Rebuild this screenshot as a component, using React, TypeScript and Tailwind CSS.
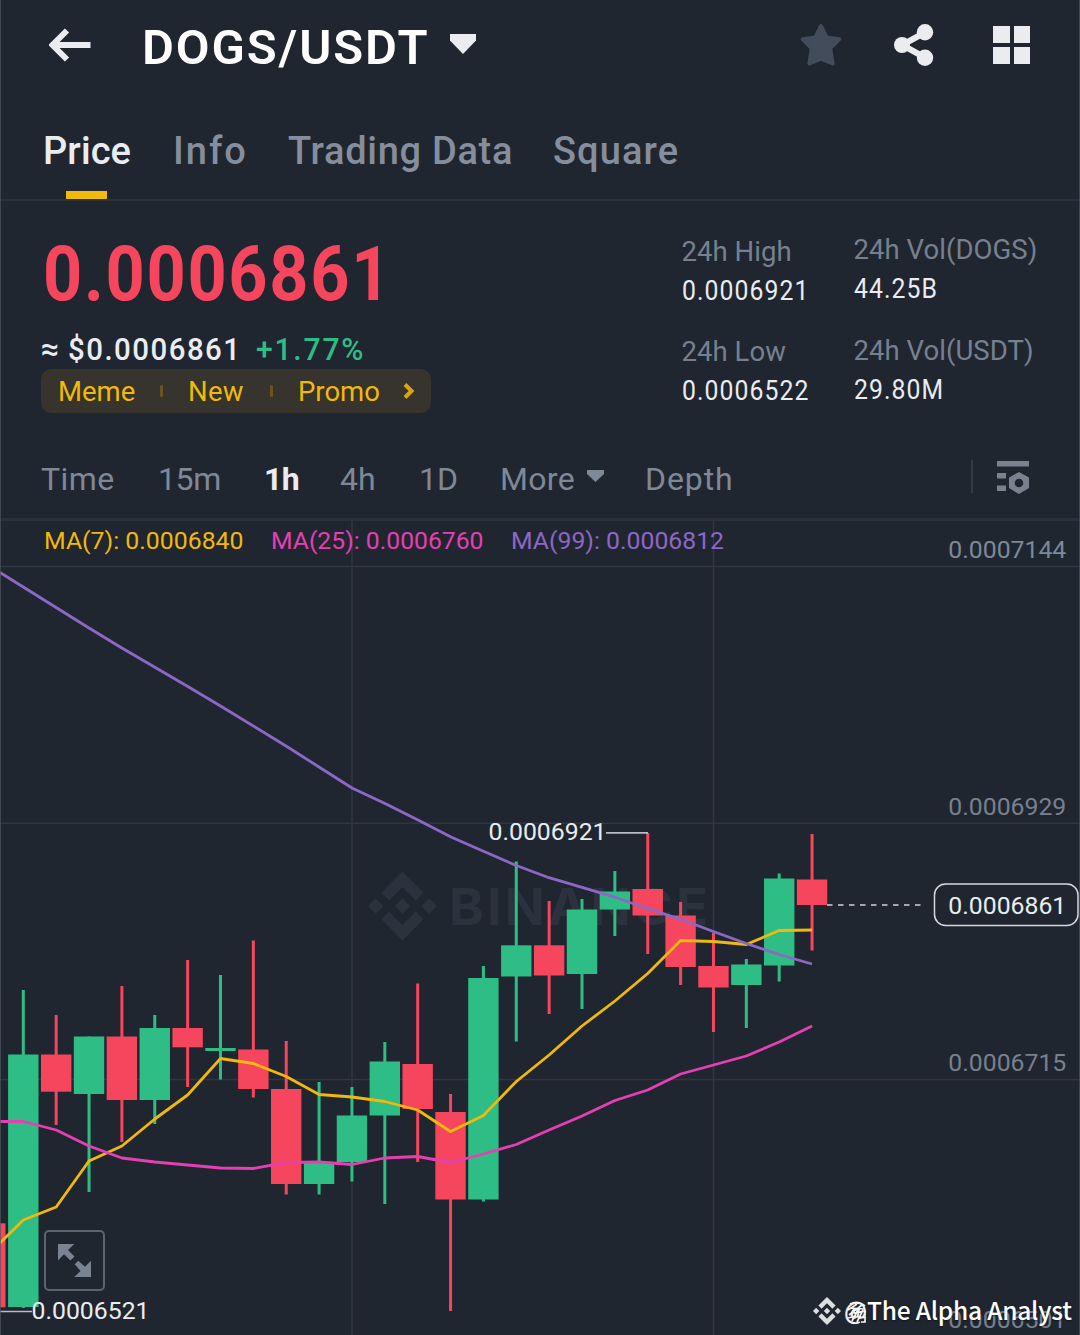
import React from "react";

const tabs = [
  { label: "Price", cls: "w-[88px] text-[#eaecef] tracking-[0.1px]", active: true },
  { label: "Info", cls: "w-[73px] text-[#848e9c] tracking-[2px]" },
  { label: "Trading Data", cls: "w-[223px] text-[#848e9c] tracking-[0.7px]" },
  { label: "Square", cls: "w-[126px] text-[#848e9c] tracking-[1.1px]" },
];

const up = "#2ebd85";
const down = "#f6465d";

/* high, body top, body bottom, low */
const candles: [string, number, number, number, number][] = [
  [up, 990, 1054.5, 1307, 1308],
  [down, 1015, 1054.5, 1091.7, 1125],
  [up, 1036.5, 1036.5, 1094, 1192],
  [down, 986, 1036.5, 1100, 1142],
  [up, 1015, 1028, 1100, 1124],
  [down, 960, 1028, 1047.3, 1087],
  [up, 975, 1048, 1051, 1079.5],
  [down, 940.5, 1049.5, 1089, 1097.5],
  [down, 1041, 1089, 1184, 1194.5],
  [up, 1082, 1163, 1184, 1194.5],
  [up, 1087, 1115.5, 1162, 1181.5],
  [up, 1042, 1061.5, 1115.5, 1204],
  [down, 983.5, 1064, 1109, 1162],
  [down, 1094, 1112, 1199.5, 1311],
  [up, 966, 978, 1199.5, 1201.5],
  [up, 861.5, 945.3, 976.5, 1041.5],
  [down, 901, 945.3, 975.5, 1014],
  [up, 899, 909.5, 974, 1009],
  [up, 871, 891.5, 909.5, 936],
  [down, 833, 889, 915.5, 954],
  [down, 902, 915.5, 967, 985],
  [down, 933, 966, 987.5, 1032],
  [up, 959, 964.5, 985, 1028],
  [up, 873.5, 878.5, 965.5, 981.5],
  [down, 834, 879.5, 905, 950.5],
];

const ma7 = [1220, 1207, 1161, 1146, 1119, 1095, 1058.5, 1063.5, 1076.5, 1094.5, 1097, 1101.5, 1110, 1131.5, 1115.5, 1081.5, 1055, 1026, 1001, 973.5, 940.5, 941.5, 944.5, 930.5, 930];
const ma25 = [1121.5, 1130, 1146, 1158, 1162, 1165, 1168, 1168.5, 1162.5, 1162, 1164.5, 1158, 1156.5, 1162.5, 1154, 1144.5, 1130, 1116, 1100.5, 1090, 1074, 1065, 1056, 1042, 1026];
const ma99 =
  "0,572.5 89,628 121,647.5 187,686 220.5,706 286,746 319,767 352,788 385,803.5 418,820 451,837 484,851.5 516.3,865.5 549,877.7 582,887.3 614.8,897.2 647.7,908.5 680.6,919.3 713.4,931.5 746.3,943.5 779,954.5 812,964";

const cx = (i: number) => 23.3 + i * 32.865;
const line = (start: number, ys: number[]) =>
  [`0,${start}`, ...ys.map((y, i) => `${cx(i).toFixed(1)},${y}`)].join(" ");

const BINANCE =
  "M16.624 13.9202l2.7175 2.7154-7.353 7.353-7.353-7.352 2.7175-2.7164 4.6355 4.6595 4.6356-4.6595zm4.6366-4.6366L24 12l-2.7154 2.7164L18.5682 12l2.6924-2.7164zm-9.272.001l2.7163 2.6914-2.7164 2.7174v-.001L9.2721 12l2.7164-2.7154zm-9.2722-.001L5.4088 12l-2.6914 2.6924L0 12l2.7164-2.7164zM11.9885.0115l7.353 7.329-2.7174 2.7154-4.6356-4.6356-4.6355 4.6595-2.7174-2.7154 7.353-7.353z";

function ChartText({ x, y, w, fill, children }: { x: number; y: number; w: number; fill: string; children: string }) {
  return (
    <text x={x} y={y} textLength={w} lengthAdjust="spacingAndGlyphs" fill={fill} className="text-[23.7px]">
      {children}
    </text>
  );
}

function Header() {
  return (
    <header className="flex h-[94px] items-center pl-[49px] pr-[50px]">
      <svg width="42" height="34" viewBox="0 0 42 34" fill="none" className="mb-1">
        <path d="M3 17H41.5M18 2.5L3.5 17L18 31.5" stroke="#eaecef" strokeWidth="6" />
      </svg>
      <h1 className="ml-[51px] w-[308px] whitespace-nowrap text-[49px] font-semibold leading-none tracking-[1.9px] text-white">
        DOGS/USDT
      </h1>
      <svg width="26" height="20" viewBox="0 0 26 20" className="mb-1.5">
        <path d="M0 0H26V6.5L13 20L0 6.5Z" fill="#eaecef" />
      </svg>
      <div className="mb-1 ml-auto flex items-center">
        <svg width="42" height="42" viewBox="0 0 42 42">
          <path
            d="M21 2L26.6 13.4L39.3 15.2L30.2 24.4L32.6 39.5L21 34.6L9.4 39.5L11.8 24.4L2.7 15.2L15.4 13.4Z"
            fill="#434c5a"
            stroke="#434c5a"
            strokeWidth="4"
            strokeLinejoin="round"
          />
        </svg>
        <svg width="40" height="42" viewBox="0 0 40 42" className="ml-[52px]">
          <path d="M31 8.5L8 21L31 33.5" fill="none" stroke="#eaecef" strokeWidth="6" />
          <circle cx="8" cy="21" r="8" fill="#eaecef" />
          <circle cx="31" cy="8.3" r="8.2" fill="#eaecef" />
          <circle cx="31" cy="33.7" r="8.2" fill="#eaecef" />
        </svg>
        <div className="ml-[59px] grid grid-cols-2 gap-x-[4px] gap-y-[4px]">
          <i className="h-[17px] w-[16.5px] bg-[#eaecef]" />
          <i className="h-[17px] w-[16.5px] bg-[#eaecef]" />
          <i className="h-[17px] w-[16.5px] bg-[#eaecef]" />
          <i className="h-[17px] w-[16.5px] bg-[#eaecef]" />
        </div>
      </div>
    </header>
  );
}

function Tabs() {
  return (
    <nav className="flex h-[107px] gap-[42px] border-b-2 border-[#2a313c] pl-[43px]">
      {tabs.map((t) => (
        <div key={t.label} className="flex flex-col items-center justify-between pt-[35px]">
          <span className={`whitespace-nowrap text-[38px] font-medium leading-[44px] ${t.cls}`}>{t.label}</span>
          {t.active && <i className="mr-[2px] h-[8px] w-[41px] bg-[#f0b90b]" />}
        </div>
      ))}
    </nav>
  );
}

function Stat({ label, value }: { label: string; value: string }) {
  return (
    <div>
      <div className="text-[27.5px] leading-[40px] tracking-[0.05px] text-[#77808e]">{label}</div>
      <div className="origin-left scale-x-[0.9] text-[27.5px] leading-[38px] tracking-[1.2px] text-[#eaecef]">{value}</div>
    </div>
  );
}

function Summary() {
  return (
    <section className="flex h-[237px]">
      <div className="w-[681.5px] pl-[41px] pt-[28px]">
        <div className="ml-[2px] origin-left scale-x-[0.9] text-[76px] font-bold leading-[90px] tracking-[1.9px] text-[#f6465d]">
          0.0006861
        </div>
        <div className="flex h-[50px] items-center pt-[10px] text-[32px] font-medium leading-[40px]">
          <span className="w-[27px] text-[#eaecef]">≈</span>
          <span className="w-[188px] origin-left scale-x-[0.92] tracking-[1.6px] text-[#eaecef]">$0.0006861</span>
          <span className="origin-left scale-x-[0.94] tracking-[1.9px] text-[#2ebd85]">+1.77%</span>
        </div>
        <div className="flex h-[44px] w-[390px] items-center rounded-[10px] bg-[#36342c] pl-[17px] text-[27.5px] text-[#f0b90b]">
          <span className="w-[102px] pt-0.5">Meme</span>
          <i className="h-[12px] w-[3px] rounded-full bg-[#6b5420]" />
          <span className="ml-[25px] w-[82px] pt-0.5 tracking-[0.3px]">New</span>
          <i className="h-[12px] w-[3px] rounded-full bg-[#6b5420]" />
          <span className="ml-[25px] w-[105px] pt-0.5">Promo</span>
          <svg width="12" height="18" viewBox="0 0 12 18" fill="none">
            <path d="M2 2.5L8.5 9L2 15.5" stroke="#d9a514" strokeWidth="4" />
          </svg>
        </div>
      </div>
      <div className="flex w-[172px] flex-col gap-[22px] pt-[31px]">
        <Stat label="24h High" value="0.0006921" />
        <Stat label="24h Low" value="0.0006522" />
      </div>
      <div className="flex flex-col gap-[23px] whitespace-nowrap pt-[29px]">
        <Stat label="24h Vol(DOGS)" value="44.25B" />
        <Stat label="24h Vol(USDT)" value="29.80M" />
      </div>
    </section>
  );
}

function Intervals() {
  return (
    <section className="flex h-[83px] items-center whitespace-nowrap border-b-[3px] border-[#2a313c] pl-[41px] pt-px text-[32px] leading-[40px] text-[#7f8897]">
      <span className="w-[117px] tracking-[0.4px]">Time</span>
      <span className="w-[106px] tracking-[-0.4px]">15m</span>
      <span className="w-[76px] font-bold tracking-[-0.5px] text-[#eaecef]">1h</span>
      <span className="w-[79px]">4h</span>
      <span className="w-[81px]">1D</span>
      <span className="w-[87px] tracking-[0.3px]">More</span>
      <svg width="17" height="12" viewBox="0 0 17 12" className="mb-1.5">
        <path d="M0 0H17V4L8.5 12L0 4Z" fill="#7f8897" />
      </svg>
      <span className="ml-[41px] w-[326px] tracking-[0.9px]">Depth</span>
      <i className="mb-1 h-[33px] w-[2px] bg-[#353c48]" />
      <svg width="33" height="33" viewBox="0 0 33 33" className="mb-[3px] ml-[24px]" fill="#7a8290">
        <path d="M0 0H32V5.5H0ZM0 12H9V17.5H0ZM0 24.5H9V30H0Z" />
        <path
          fillRule="evenodd"
          d="M22 11L32 16.5V27L22 33L12 27V16.5ZM22 17.7A4.3 4.3 0 1 0 22 26.3A4.3 4.3 0 1 0 22 17.7Z"
        />
      </svg>
    </section>
  );
}

function Chart() {
  return (
    <section className="relative h-[814px]">
      <svg width="1080" height="814" viewBox="0 521 1080 814" className="block">
        <g fill="#2c323d">
          <svg x="368" y="871.5" width="69" height="69" viewBox="0 0 24 24">
            <path d={BINANCE} />
          </svg>
          <text
            x="449"
            y="925"
            textLength="262"
            lengthAdjust="spacingAndGlyphs"
            className="font-['Inter'] text-[51px] font-bold tracking-[3px]"
          >
            BINANCE
          </text>
        </g>
        <g stroke="#303641" strokeWidth="1.5">
          <path d="M352 521V1335M713.5 521V1335M0 566.5H1080M0 823.3H1080M0 1079.5H1080" />
        </g>

        <rect x="0" y="1223.3" width="5.5" height="84" fill={down} />
        {candles.map(([color, high, top, bottom, low], i) => (
          <g key={i} fill={color}>
            <rect x={cx(i) - 1.5} y={high} width="3" height={low - high} />
            <rect x={cx(i) - 15.2} y={top} width="30.4" height={bottom - top} />
          </g>
        ))}

        <g fill="none" strokeWidth="2.8" strokeLinejoin="round">
          <polyline points={line(1243, ma7)} stroke="#f0b90b" />
          <polyline points={line(1121.5, ma25)} stroke="#e63fb3" />
          <polyline points={ma99} stroke="#8d67c6" />
        </g>

        <path d="M606 832.8H648M0 1311.5H32" stroke="#b9bcc2" strokeWidth="1.7" />
        <path d="M827 905H921" stroke="#d0d3d7" strokeWidth="1.5" strokeDasharray="5.5 5.5" />
        <rect x="934.5" y="884" width="143.5" height="41.5" rx="11" fill="#202630" stroke="#d5d8dc" strokeWidth="1.5" />

        <ChartText x={44} y={549} w={199.5} fill="#f0b90b">MA(7): 0.0006840</ChartText>
        <ChartText x={271} y={549} w={212.5} fill="#e63fb3">MA(25): 0.0006760</ChartText>
        <ChartText x={511} y={549} w={213} fill="#8d67c6">MA(99): 0.0006812</ChartText>
        <ChartText x={948.3} y={558} w={118} fill="#7f8897">0.0007144</ChartText>
        <ChartText x={948.3} y={815} w={118} fill="#77808e">0.0006929</ChartText>
        <ChartText x={948.3} y={1071} w={118} fill="#77808e">0.0006715</ChartText>
        <ChartText x={948.3} y={1328} w={118} fill="#77808e">0.0006501</ChartText>
        <ChartText x={948.3} y={914} w={118} fill="#eaecef">0.0006861</ChartText>
        <ChartText x={488.5} y={840} w={118} fill="#eaecef">0.0006921</ChartText>
        <ChartText x={31.5} y={1319} w={118} fill="#eaecef">0.0006521</ChartText>

        <svg x="813" y="1297" width="28" height="28" viewBox="0 0 24 24" fill="#dcdee0">
          <path d={BINANCE} />
        </svg>
        <text
          x="844"
          y="1320"
          textLength="23"
          lengthAdjust="spacingAndGlyphs"
          fill="#f4f4f4"
          className="font-['Noto_Sans_CJK_SC',sans-serif] text-[24px] font-medium"
        >
          @
        </text>
        <path
          fill="none"
          stroke="#f4f4f4"
          strokeWidth="1.7"
          d="M850 1304Q858 1300 865 1306M848 1310L857 1304M849 1315L862 1305M851 1308L864 1309M853 1313L866 1311M852 1321L859 1308M857 1322L863 1310M848 1318L856 1316M859 1317L866 1318M861 1322L865 1322V1312M849 1321L854 1323.5"
        />
        <text
          x="867"
          y="1320"
          textLength="205"
          fill="#fff"
          className="font-['Noto_Sans_CJK_SC',sans-serif] text-[24.5px] font-medium [text-shadow:0_1px_2px_rgba(0,0,0,0.5)]"
        >
          The Alpha Analyst
        </text>
      </svg>

      <button className="absolute left-[44px] top-[709px] flex h-[61px] w-[61px] items-center justify-center rounded-[5px] border-2 border-[#5c6471]">
        <svg width="33" height="33" viewBox="58 1244 33 33" fill="#7a8391">
          <path d="M58 1244H74.3L68 1250L74.5 1256.5L70.5 1260.5L64 1254.3L58 1260.5Z" />
          <path d="M91 1277H74.3L80.5 1271L74.7 1264.3L78.3 1260.7L85 1266.7L91 1260.7Z" />
        </svg>
      </button>
    </section>
  );
}

export default function App() {
  return (
    <main className="relative h-[1335px] w-[1080px] overflow-hidden bg-[#202630] font-['Roboto',sans-serif]">
      <Header />
      <Tabs />
      <Summary />
      <Intervals />
      <Chart />
      <div className="pointer-events-none absolute inset-y-0 left-0 w-px bg-[#4f5661]/70" />
      <div className="pointer-events-none absolute inset-y-0 right-0 w-px bg-[#4f5661]/70" />
    </main>
  );
}
